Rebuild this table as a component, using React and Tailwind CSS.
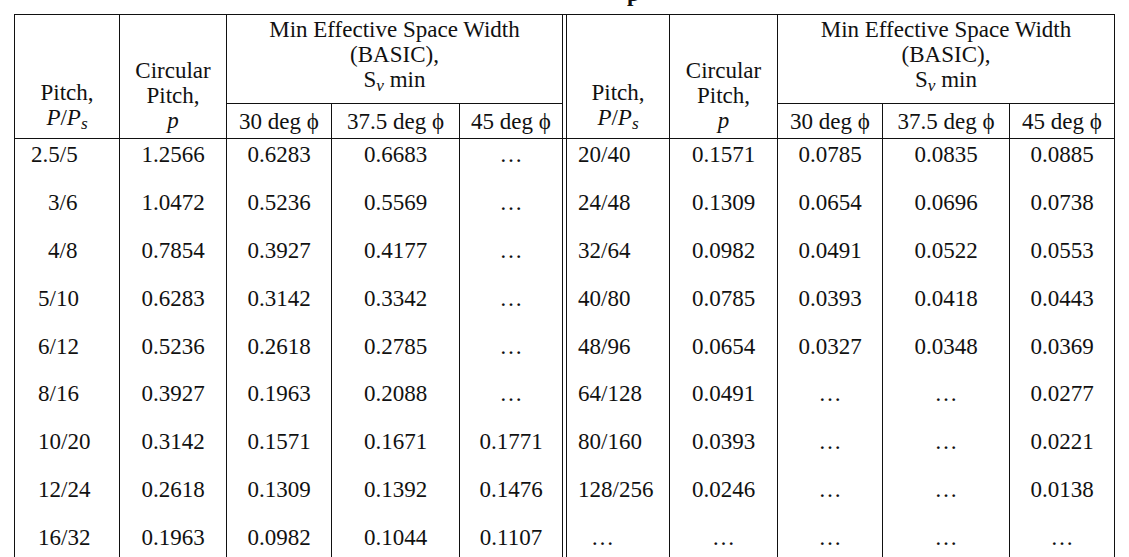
import React from "react";

const rowsL = [
  ["2.5/5", "1.2566", "0.6283", "0.6683", "…"],
  ["3/6", "1.0472", "0.5236", "0.5569", "…"],
  ["4/8", "0.7854", "0.3927", "0.4177", "…"],
  ["5/10", "0.6283", "0.3142", "0.3342", "…"],
  ["6/12", "0.5236", "0.2618", "0.2785", "…"],
  ["8/16", "0.3927", "0.1963", "0.2088", "…"],
  ["10/20", "0.3142", "0.1571", "0.1671", "0.1771"],
  ["12/24", "0.2618", "0.1309", "0.1392", "0.1476"],
  ["16/32", "0.1963", "0.0982", "0.1044", "0.1107"],
];

const rowsR = [
  ["20/40", "0.1571", "0.0785", "0.0835", "0.0885"],
  ["24/48", "0.1309", "0.0654", "0.0696", "0.0738"],
  ["32/64", "0.0982", "0.0491", "0.0522", "0.0553"],
  ["40/80", "0.0785", "0.0393", "0.0418", "0.0443"],
  ["48/96", "0.0654", "0.0327", "0.0348", "0.0369"],
  ["64/128", "0.0491", "…", "…", "0.0277"],
  ["80/160", "0.0393", "…", "…", "0.0221"],
  ["128/256", "0.0246", "…", "…", "0.0138"],
  ["…", "…", "…", "…", "…"],
];

function leftPad(v) {
  if (v === "2.5/5") return "pl-[16px]";
  if (v === "3/6" || v === "4/8") return "pl-[33px]";
  return "pl-[23px]";
}

function rightPad(v) {
  if (v === "…") return "pl-[24px]";
  return "pl-[11px]";
}

const cellB = "border-r border-[#111]";
const hdr = "border-r border-b border-[#111]";

function PitchHead() {
  return (
    <div className={`${hdr} row-span-2 flex flex-col items-center justify-end pb-[8px] text-center`}>
      <div>Pitch,</div>
      <div>
        <i>P</i>/<i>P</i>
        <sub className="italic">s</sub>
      </div>
    </div>
  );
}

function CircHead() {
  return (
    <div className={`${hdr} row-span-2 flex flex-col items-center justify-end pb-[5px] text-center`}>
      <div>Circular</div>
      <div>Pitch,</div>
      <div>
        <i>p</i>
      </div>
    </div>
  );
}

function MinHead() {
  return (
    <div className={`${hdr} col-span-3 pt-[2px] text-center`}>
      <div>Min Effective Space Width</div>
      <div>(BASIC),</div>
      <div>
        S<sub className="italic">v</sub> min
      </div>
    </div>
  );
}

function SubHead({ children }) {
  return (
    <div className={`${hdr} flex items-center justify-center`}>{children}</div>
  );
}

export default function App() {
  return (
    <div className="w-[1129px] h-[557px] overflow-hidden bg-white text-[#111] font-['Liberation_Serif','Times_New_Roman',serif] text-[23px] leading-[25px]">
      <div className="h-[14px] overflow-hidden pl-[627px]">
        <div className="mt-[-18px] font-bold leading-[23px]">p</div>
      </div>
      <div className="ml-[14px] w-fit border-l border-t border-[#111] grid grid-cols-[105px_107px_105px_128px_103px_4px_103px_108px_105px_127px_105px] grid-rows-[89px_35px_repeat(9,47.875px)]">
        <PitchHead />
        <CircHead />
        <MinHead />
        <div className={`${hdr} row-span-2`} />
        <PitchHead />
        <CircHead />
        <MinHead />
        <SubHead>30 deg ϕ</SubHead>
        <SubHead>37.5 deg ϕ</SubHead>
        <SubHead>45 deg ϕ</SubHead>
        <SubHead>30 deg ϕ</SubHead>
        <SubHead>37.5 deg ϕ</SubHead>
        <SubHead>45 deg ϕ</SubHead>
        {rowsL.map((l, i) => {
          const r = rowsR[i];
          return (
            <React.Fragment key={i}>
              <div className={`${cellB} pt-[3px] ${leftPad(l[0])}`}>{l[0]}</div>
              {l.slice(1).map((v, j) => (
                <div key={"l" + j} className={`${cellB} pt-[3px] text-center`}>
                  {v}
                </div>
              ))}
              <div className={cellB} />
              <div className={`${cellB} pt-[3px] ${rightPad(r[0])}`}>{r[0]}</div>
              {r.slice(1).map((v, j) => (
                <div key={"r" + j} className={`${cellB} pt-[3px] text-center`}>
                  {v}
                </div>
              ))}
            </React.Fragment>
          );
        })}
      </div>
    </div>
  );
}
